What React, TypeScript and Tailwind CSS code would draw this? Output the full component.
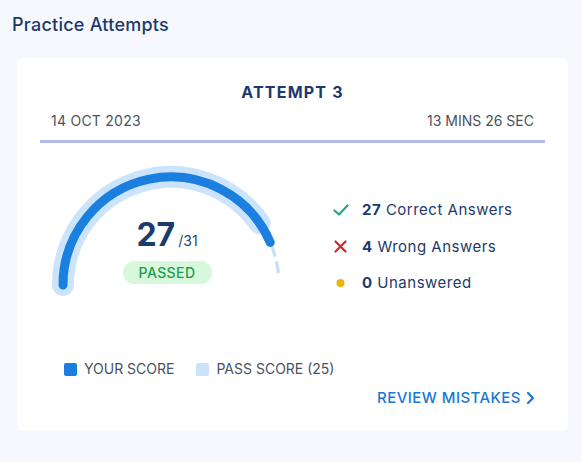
import React from 'react';

const CX = 131;
const CY = 125;
const R = 108;

const pt = (deg: number) => {
  const a = (deg * Math.PI) / 180;
  return [CX + R * Math.cos(a), CY - R * Math.sin(a)];
};

const arc = (from: number, to: number) => {
  const [x1, y1] = pt(from);
  const [x2, y2] = pt(to);
  return `M ${x1.toFixed(2)} ${y1.toFixed(2)} A ${R} ${R} 0 0 1 ${x2.toFixed(2)} ${y2.toFixed(2)}`;
};

const Gauge: React.FC<{ score: number; total: number; pass: number }> = ({ score, total, pass }) => {
  const scoreEnd = 180 - (score / total) * 180;
  const passEnd = 180 - (pass / total) * 180;
  return (
    <div className="relative w-[260px] h-[140px] shrink-0">
      <svg width="260" height="140" viewBox="0 0 260 140" className="absolute inset-0">
        <path d={arc(180, passEnd)} fill="none" stroke="#cbe4fb" strokeWidth="22" strokeLinecap="round" />
        <path d={arc(scoreEnd, 6)} fill="none" stroke="#c3def8" strokeWidth="3" strokeDasharray="15 5 12 100" />
        <path d={arc(180, scoreEnd)} fill="none" stroke="#1b7fe0" strokeWidth="9" strokeLinecap="round" />
      </svg>
      <div className="absolute left-0 right-0 top-[55px] flex flex-col items-center pr-[6px]">
        <div className="flex items-baseline">
          <span className="text-[32px] leading-[40px] font-bold text-[#1c3a6c]">{score}</span>
          <span className="text-[14px] ml-[3px] text-[#2a4170]">/{total}</span>
        </div>
        <div className="mt-[6px] h-[23px] w-[89px] rounded-full bg-[#d7f8dd] flex items-center justify-center text-[14px] font-medium text-[#1a9f4b] tracking-[0.4px]">
          PASSED
        </div>
      </div>
    </div>
  );
};

const Check = () => (
  <svg width="16" height="14" viewBox="0 0 16 14">
    <path d="M1.5 7.5 L6 11.5 L14.5 2.5" fill="none" stroke="#1fae7a" strokeWidth="2.2" strokeLinecap="round" strokeLinejoin="round" />
  </svg>
);

const Cross = () => (
  <svg width="16" height="14" viewBox="0 0 16 14">
    <path d="M2.5 1.5 L12.5 11.5 M12.5 1.5 L2.5 11.5" fill="none" stroke="#dc2626" strokeWidth="2.2" strokeLinecap="round" />
  </svg>
);

const Dot = () => (
  <svg width="16" height="14" viewBox="0 0 16 14">
    <circle cx="7.5" cy="7" r="4" fill="#eab308" />
  </svg>
);

const App: React.FC = () => {
  return (
    <div className="min-h-screen bg-[#f6f8fd] font-['Inter',sans-serif] pt-[13px]">
      <h1 className="pl-[12px] text-[18px] leading-[24px] font-medium text-[#1c3a6b] tracking-[0.25px]">Practice Attempts</h1>

      <div className="mt-[21px] ml-[17px] w-[551px] bg-white rounded-[6px] px-[23px] pt-[22px] pb-[23px]">
        <div className="text-center text-[16px] leading-[24px] font-bold text-[#1c3a6b] tracking-[1.2px]">ATTEMPT 3</div>
        <div className="mt-[7px] flex justify-between px-[11px] text-[14px] leading-[20px] text-[#4a5261]">
          <span className="tracking-[0.25px]">14 OCT 2023</span>
          <span>13 MINS 26 SEC</span>
        </div>
        <div className="mt-[9px] h-[3px] bg-[#b4b9eb]" />

        <div className="mt-[17px] flex items-start">
          <Gauge score={27} total={31} pass={25} />
          <div className="ml-[33px] mt-[38px] flex flex-col gap-[12.5px] text-[15px] leading-[24px] text-[#1c3a6b] tracking-[0.5px]">
            <div className="flex items-center gap-[13px]">
              <Check />
              <span><b className="font-bold">27</b> Correct Answers</span>
            </div>
            <div className="flex items-center gap-[13px]">
              <Cross />
              <span><b className="font-bold">4</b> Wrong Answers</span>
            </div>
            <div className="flex items-center gap-[13px]">
              <Dot />
              <span><b className="font-bold">0</b> Unanswered</span>
            </div>
          </div>
        </div>

        <div className="mt-[59px] pl-[24px] flex items-center text-[14px] leading-[20px] text-[#4a5261]">
          <span className="w-[13px] h-[13px] rounded-[2px] bg-[#1b7fe0]" />
          <span className="ml-[7px]">YOUR SCORE</span>
          <span className="ml-[22px] w-[13px] h-[13px] rounded-[2px] bg-[#cbe4fb]" />
          <span className="ml-[7px]">PASS SCORE (25)</span>
        </div>

        <div className="mt-[9px] flex justify-end pr-[9px]">
          <button className="flex items-center gap-[4px] text-[15px] leading-[20px] font-medium text-[#1a78cf] tracking-[0.45px]">
            REVIEW MISTAKES
            <svg width="11" height="14" viewBox="0 0 11 14">
              <path d="M3 2 L8 7 L3 12" fill="none" stroke="#1a78cf" strokeWidth="2.2" strokeLinecap="round" strokeLinejoin="round" />
            </svg>
          </button>
        </div>
      </div>
    </div>
  );
};

export default App;
